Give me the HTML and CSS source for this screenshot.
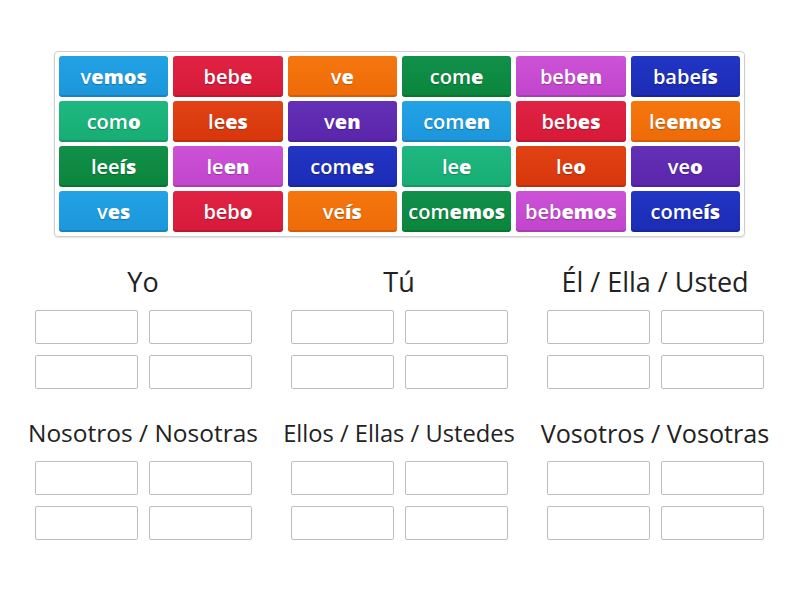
FILE: index.html
```html
<!DOCTYPE html>
<html lang="es">
<head>
<meta charset="utf-8">
<link rel="stylesheet" href="styles.css">
</head>
<body>
<div class="bank">
  <div class="tile blue">v<b>emos</b></div>
  <div class="tile red">beb<b>e</b></div>
  <div class="tile orange">v<b>e</b></div>
  <div class="tile dgreen">com<b>e</b></div>
  <div class="tile magenta">beb<b>en</b></div>
  <div class="tile navy">babe<b>ís</b></div>

  <div class="tile teal">com<b>o</b></div>
  <div class="tile rorange">le<b>es</b></div>
  <div class="tile purple">v<b>en</b></div>
  <div class="tile blue">com<b>en</b></div>
  <div class="tile red">beb<b>es</b></div>
  <div class="tile orange">le<b>emos</b></div>

  <div class="tile dgreen">lee<b>ís</b></div>
  <div class="tile magenta">le<b>en</b></div>
  <div class="tile navy">com<b>es</b></div>
  <div class="tile teal">le<b>e</b></div>
  <div class="tile rorange">le<b>o</b></div>
  <div class="tile purple">ve<b>o</b></div>

  <div class="tile blue">v<b>es</b></div>
  <div class="tile red">beb<b>o</b></div>
  <div class="tile orange">ve<b>ís</b></div>
  <div class="tile dgreen">com<b>emos</b></div>
  <div class="tile magenta">beb<b>emos</b></div>
  <div class="tile navy">come<b>ís</b></div>
</div>

<div class="groups">
  <div class="group">
    <div class="title t1">Yo</div>
    <div class="slots"><div class="slot"></div><div class="slot"></div><div class="slot"></div><div class="slot"></div></div>
  </div>
  <div class="group">
    <div class="title t1">Tú</div>
    <div class="slots"><div class="slot"></div><div class="slot"></div><div class="slot"></div><div class="slot"></div></div>
  </div>
  <div class="group">
    <div class="title t1">Él / Ella / Usted</div>
    <div class="slots"><div class="slot"></div><div class="slot"></div><div class="slot"></div><div class="slot"></div></div>
  </div>
  <div class="group">
    <div class="title t2 nos">Nosotros / Nosotras</div>
    <div class="slots"><div class="slot"></div><div class="slot"></div><div class="slot"></div><div class="slot"></div></div>
  </div>
  <div class="group">
    <div class="title t2 ellos">Ellos / Ellas / Ustedes</div>
    <div class="slots"><div class="slot"></div><div class="slot"></div><div class="slot"></div><div class="slot"></div></div>
  </div>
  <div class="group">
    <div class="title t2 vos">Vosotros / Vosotras</div>
    <div class="slots"><div class="slot"></div><div class="slot"></div><div class="slot"></div><div class="slot"></div></div>
  </div>
</div>
</body>
</html>
```
FILE: styles.css
```css
html, body {
  margin: 0;
  padding: 0;
  background: #fff;
  font-family: "Open Sans", "Liberation Sans", sans-serif;
}

.bank {
  margin: 51px 0 0 54px;
  width: 691px;
  box-sizing: border-box;
  border: 1px solid #cfcfcf;
  border-radius: 4px;
  box-shadow: 0 1px 2px rgba(0,0,0,0.12);
  padding: 4px;
  display: grid;
  grid-template-columns: repeat(6, 1fr);
  column-gap: 5px;
  row-gap: 4px;
}

.tile {
  height: 41px;
  border-radius: 3px;
  color: #fff;
  font-size: 20px;
  font-weight: 600;
  display: flex;
  align-items: center;
  justify-content: center;
  text-shadow: 0 1px 1px rgba(0,0,0,0.25);
  box-shadow: inset 0 -2px 0 rgba(0,0,0,0.12);
  white-space: nowrap;
}
.tile b { font-weight: 800; }

.blue    { background: linear-gradient(#23a2e6, #1c96da); }
.red     { background: linear-gradient(#e02244, #d71a38); }
.orange  { background: linear-gradient(#f5760f, #ee6b08); }
.dgreen  { background: linear-gradient(#11904a, #0b853c); }
.magenta { background: linear-gradient(#cc52d6, #c045cc); }
.navy    { background: linear-gradient(#2236c4, #1b2bb5); }
.teal    { background: linear-gradient(#1fb882, #17ad74); }
.rorange { background: linear-gradient(#e04314, #d8360c); }
.purple  { background: linear-gradient(#6430b6, #5a25ab); }

.groups {
  margin-top: 27px;
  padding: 0 15px;
  display: grid;
  grid-template-columns: repeat(3, 256px);
  row-gap: 26px;
}

.group {
  display: flex;
  flex-direction: column;
  align-items: center;
}

.title {
  height: 36px;
  line-height: 36px;
  margin-bottom: 10px;
  color: #222;
  white-space: nowrap;
  text-align: center;
}
.t1 { font-size: 27px; }
.nos { font-size: 24.5px; }
.ellos { font-size: 23.7px; }
.vos { font-size: 25.2px; }

.slots {
  display: grid;
  grid-template-columns: 103px 103px;
  column-gap: 11px;
  row-gap: 11px;
}

.slot {
  height: 34px;
  box-sizing: border-box;
  border: 1px solid #bdbdbd;
  border-radius: 2px;
  background: #fff;
}
```
